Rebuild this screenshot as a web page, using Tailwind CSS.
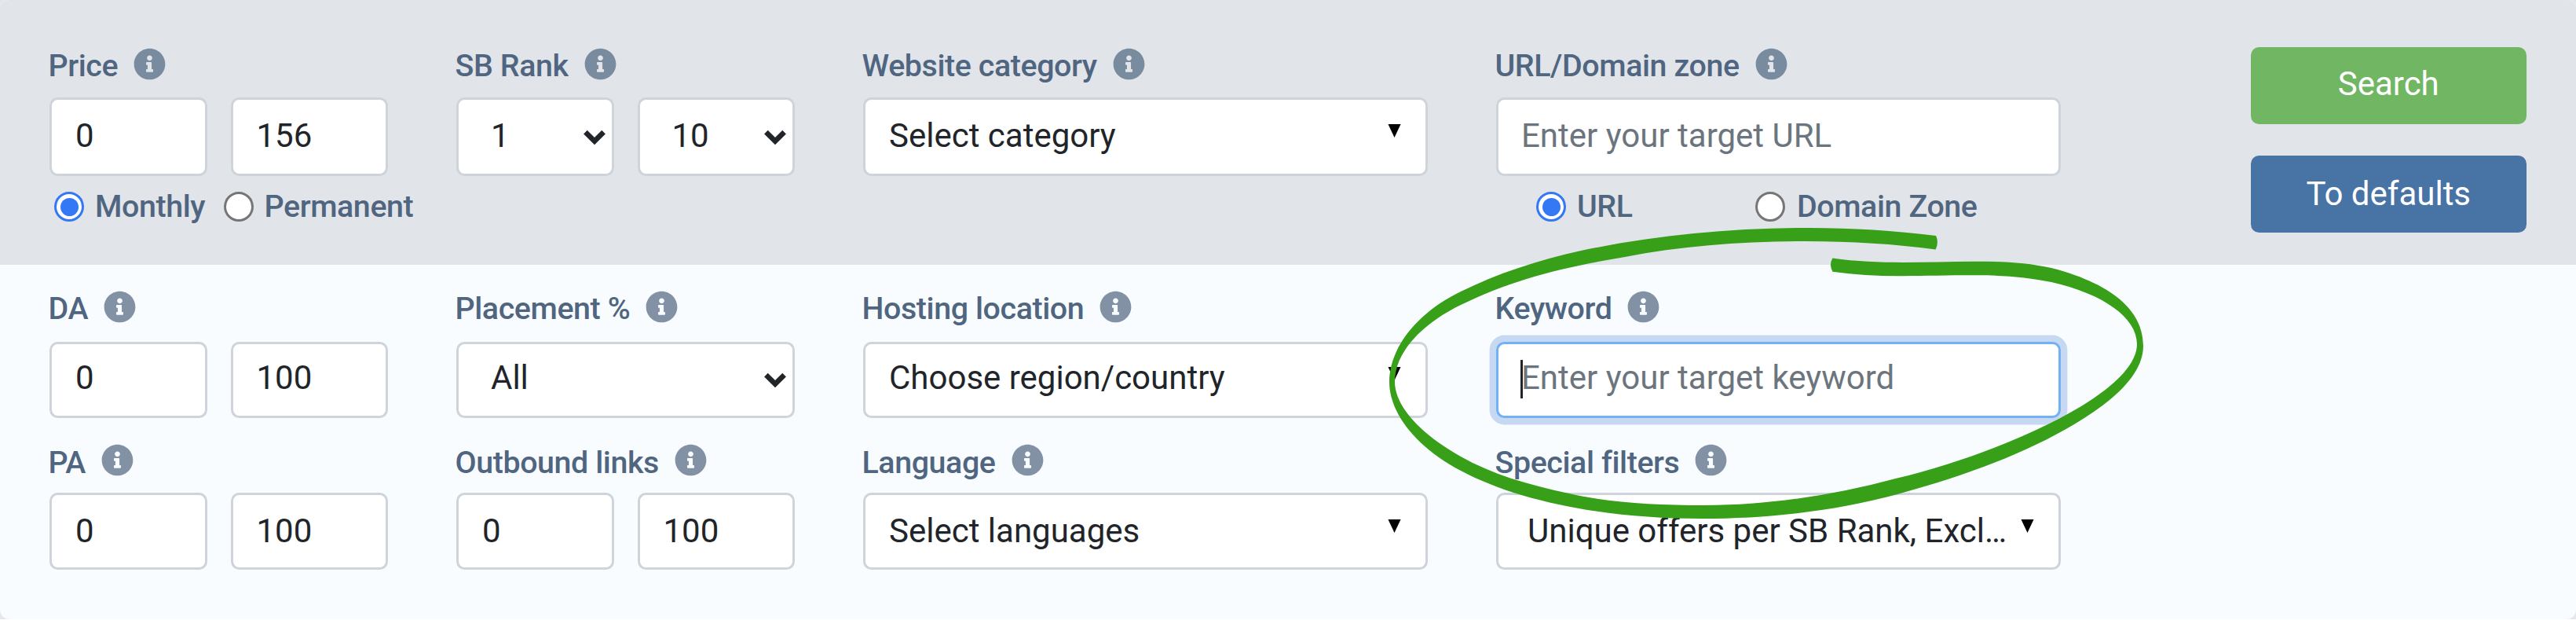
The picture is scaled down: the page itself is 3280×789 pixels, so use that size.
<!DOCTYPE html>
<html lang="en">
<head>
<meta charset="utf-8">
<title>Offer filters</title>
<script src="https://cdn.jsdelivr.net/npm/@tailwindcss/browser@4"></script>
</head>
<body class="bg-white font-['Roboto',sans-serif] text-[42px] leading-none text-[#212529]">
<svg class="hidden">
  <symbol id="info" viewBox="0 0 512 512"><path fill="currentColor" d="M256 8C119.043 8 8 119.083 8 256c0 136.997 111.043 248 248 248s248-111.003 248-248C504 119.083 392.957 8 256 8zm0 110c23.196 0 42 18.804 42 42s-18.804 42-42 42-42-18.804-42-42 18.804-42 42-42zm56 254c0 6.627-5.373 12-12 12h-88c-6.627 0-12-5.373-12-12v-24c0-6.627 5.373-12 12-12h12v-64h-12c-6.627 0-12-5.373-12-12v-24c0-6.627 5.373-12 12-12h64c6.627 0 12 5.373 12 12v100h12c6.627 0 12 5.373 12 12v24z"/></symbol>
  <symbol id="chevron" viewBox="0 0 28 20"><path fill="none" stroke="currentColor" stroke-width="6.6" d="M2.4 3.2 14 14.6 25.6 3.2"/></symbol>
  <symbol id="caret" viewBox="0 0 17 18"><path fill="#000" d="M0 0H17L8.5 18z"/></symbol>
</svg>
<main class="relative h-[789px] w-[3280px] overflow-hidden bg-white">
  <div class="h-[788px] overflow-hidden bg-[#e6e7ea]">
  <div class="h-[788px] overflow-hidden rounded-[12px] bg-[#f8fcff]">
    <section class="flex h-[336.7px] gap-[87px] bg-[#e1e4e9] pl-[63px] pt-[54px]">
      <div class="w-[431px]">
        <div class="-ml-[1.5px] flex h-[60px] items-center gap-[20px] text-[39.375px] font-medium tracking-[-0.4px] text-[#4f6580]">Price<svg class="mb-[5px] size-[41px] text-[#798b9e]"><use href="#info"/></svg></div>
        <div class="mt-[10px] flex gap-[30px]">
          <div class="flex h-[100px] w-[200.5px] items-center rounded-[10.5px] border-[3px] border-[#ced4da] bg-white pb-[2px] pl-[30px]">0</div>
          <div class="flex h-[100px] w-[200.5px] items-center rounded-[10.5px] border-[3px] border-[#ced4da] bg-white pb-[2px] pl-[30px]">156</div>
        </div>
        <div class="mt-[14px] flex h-[50px] items-center whitespace-nowrap pl-[6px] text-[39.375px] font-medium tracking-[-0.4px] text-[#4f6580]">
          <span class="flex size-[38px] shrink-0 items-center justify-center rounded-full border-[3px] border-[#3478f6] bg-white"><span class="size-[23px] rounded-full bg-[#3478f6]"></span></span>
          <span class="ml-[14px] w-[163.5px] shrink-0">Monthly</span>
          <span class="size-[38px] shrink-0 rounded-full border-[3px] border-[#767676] bg-white"></span>
          <span class="ml-[14px]">Permanent</span>
        </div>
      </div>
      <div class="w-[431px]">
        <div class="-ml-[1.5px] flex h-[60px] items-center gap-[20px] text-[39.375px] font-medium tracking-[-0.4px] text-[#4f6580]">SB Rank<svg class="mb-[5px] size-[41px] text-[#798b9e]"><use href="#info"/></svg></div>
        <div class="mt-[10px] flex gap-[30px]">
          <div class="flex h-[100px] w-[200.5px] items-center justify-between rounded-[10.5px] border-[3px] border-[#ced4da] bg-white pb-[2px] pl-[41px] pr-[8px]">1<svg class="mt-[3px] h-[20px] w-[28px]"><use href="#chevron"/></svg></div>
          <div class="flex h-[100px] w-[200.5px] items-center justify-between rounded-[10.5px] border-[3px] border-[#ced4da] bg-white pb-[2px] pl-[41px] pr-[8px]">10<svg class="mt-[3px] h-[20px] w-[28px]"><use href="#chevron"/></svg></div>
        </div>
      </div>
      <div class="w-[719px]">
        <div class="-ml-[1.5px] flex h-[60px] items-center gap-[20px] text-[39.375px] font-medium tracking-[-0.4px] text-[#4f6580]">Website category<svg class="mb-[5px] size-[41px] text-[#798b9e]"><use href="#info"/></svg></div>
        <div class="mt-[10px] flex h-[100px] items-center justify-between rounded-[10.5px] border-[3px] border-[#ced4da] bg-white pb-[2px] pl-[30px] pr-[31px]">Select category<svg class="mb-[13px] h-[17px] w-[17px]"><use href="#caret"/></svg></div>
      </div>
      <div class="w-[718.5px]">
        <div class="-ml-[1.5px] flex h-[60px] items-center gap-[20px] text-[39.375px] font-medium tracking-[-0.4px] text-[#4f6580]">URL/Domain zone<svg class="mb-[5px] size-[41px] text-[#798b9e]"><use href="#info"/></svg></div>
        <div class="mt-[10px] flex h-[100px] items-center rounded-[10.5px] border-[3px] border-[#ced4da] bg-white pb-[2px] pl-[29px] text-[#6c757d]">Enter your target URL</div>
        <div class="mt-[14px] flex h-[50px] items-center whitespace-nowrap pl-[51px] text-[39.375px] font-medium tracking-[-0.4px] text-[#4f6580]">
          <span class="flex size-[38px] shrink-0 items-center justify-center rounded-full border-[3px] border-[#3478f6] bg-white"><span class="size-[23px] rounded-full bg-[#3478f6]"></span></span>
          <span class="ml-[14px] w-[227px] shrink-0">URL</span>
          <span class="size-[38px] shrink-0 rounded-full border-[3px] border-[#767676] bg-white"></span>
          <span class="ml-[15px]">Domain Zone</span>
        </div>
      </div>
      <div class="ml-[155px] mt-[6px] flex w-[351.500px] flex-col gap-[40px] text-center text-white">
        <div class="flex h-[98px] items-center justify-center rounded-[10.5px] bg-[#71b663] pb-[5px]">Search</div>
        <div class="flex h-[98px] items-center justify-center rounded-[10.5px] bg-[#4873a5]">To defaults</div>
      </div>
    </section>
    <section class="flex gap-[87px] pl-[63px] pt-[26px]">
      <div class="w-[431px]">
        <div class="-ml-[1.5px] flex h-[60px] items-center gap-[20px] text-[39.375px] font-medium tracking-[-0.4px] text-[#4f6580]">DA<svg class="mb-[5px] size-[41px] text-[#8391a5]"><use href="#info"/></svg></div>
        <div class="mt-[12px] flex gap-[30px]">
          <div class="flex h-[97.5px] w-[200.5px] items-center rounded-[10.5px] border-[3px] border-[#ced4da] bg-white pb-[5px] pl-[30px]">0</div>
          <div class="flex h-[97.5px] w-[200.5px] items-center rounded-[10.5px] border-[3px] border-[#ced4da] bg-white pb-[5px] pl-[30px]">100</div>
        </div>
        <div class="-ml-[1.5px] mt-[26px] flex h-[60px] items-center gap-[20px] text-[39.375px] font-medium tracking-[-0.4px] text-[#4f6580]">PA<svg class="mb-[5px] size-[41px] text-[#8391a5]"><use href="#info"/></svg></div>
        <div class="mt-[9px] flex gap-[30px]">
          <div class="flex h-[97.5px] w-[200.5px] items-center rounded-[10.5px] border-[3px] border-[#ced4da] bg-white pl-[30px]">0</div>
          <div class="flex h-[97.5px] w-[200.5px] items-center rounded-[10.5px] border-[3px] border-[#ced4da] bg-white pl-[30px]">100</div>
        </div>
      </div>
      <div class="w-[431px]">
        <div class="-ml-[1.5px] flex h-[60px] items-center gap-[20px] text-[39.375px] font-medium tracking-[-0.4px] text-[#4f6580]">Placement %<svg class="mb-[5px] size-[41px] text-[#8391a5]"><use href="#info"/></svg></div>
        <div class="mt-[12px] flex h-[97.5px] items-center justify-between rounded-[10.5px] border-[3px] border-[#ced4da] bg-white pb-[5px] pl-[41px] pr-[8px]">All<svg class="mt-[6px] h-[20px] w-[28px]"><use href="#chevron"/></svg></div>
        <div class="-ml-[1.5px] mt-[26px] flex h-[60px] items-center gap-[20px] text-[39.375px] font-medium tracking-[-0.4px] text-[#4f6580]">Outbound links<svg class="mb-[5px] size-[41px] text-[#8391a5]"><use href="#info"/></svg></div>
        <div class="mt-[9px] flex gap-[30px]">
          <div class="flex h-[97.5px] w-[200.5px] items-center rounded-[10.5px] border-[3px] border-[#ced4da] bg-white pl-[30px]">0</div>
          <div class="flex h-[97.5px] w-[200.5px] items-center rounded-[10.5px] border-[3px] border-[#ced4da] bg-white pl-[30px]">100</div>
        </div>
      </div>
      <div class="w-[719px]">
        <div class="-ml-[1.5px] flex h-[60px] items-center gap-[20px] text-[39.375px] font-medium tracking-[-0.4px] text-[#4f6580]">Hosting location<svg class="mb-[5px] size-[41px] text-[#8391a5]"><use href="#info"/></svg></div>
        <div class="mt-[12px] flex h-[97.5px] items-center justify-between rounded-[10.5px] border-[3px] border-[#ced4da] bg-white pb-[5px] pl-[30px] pr-[31px]">Choose region/country<svg class="mb-[11px] h-[17px] w-[17px]"><use href="#caret"/></svg></div>
        <div class="-ml-[1.5px] mt-[26px] flex h-[60px] items-center gap-[20px] text-[39.375px] font-medium tracking-[-0.4px] text-[#4f6580]">Language<svg class="mb-[5px] size-[41px] text-[#8391a5]"><use href="#info"/></svg></div>
        <div class="mt-[9px] flex h-[97.5px] items-center justify-between rounded-[10.5px] border-[3px] border-[#ced4da] bg-white pl-[30px] pr-[31px]">Select languages<svg class="mb-[12px] h-[17px] w-[17px]"><use href="#caret"/></svg></div>
      </div>
      <div class="w-[718.5px]">
        <div class="-ml-[1.5px] flex h-[60px] items-center gap-[20px] text-[39.375px] font-medium tracking-[-0.4px] text-[#4f6580]">Keyword<svg class="mb-[5px] size-[41px] text-[#8391a5]"><use href="#info"/></svg></div>
        <div class="relative mt-[12px] flex h-[97.5px] items-center rounded-[10.5px] border-[3px] border-[#73b1f7] bg-white pb-[5px] pl-[29px] text-[#6c757d] shadow-[0_0_0_8.4px_#c7d9f2]">Enter your target keyword<span class="absolute left-[28px] top-[20px] h-[49px] w-[3px] bg-[#212529]"></span></div>
        <div class="-ml-[1.5px] mt-[26px] flex h-[60px] items-center gap-[20px] text-[39.375px] font-medium tracking-[-0.4px] text-[#4f6580]">Special filters<svg class="mb-[5px] size-[41px] text-[#8391a5]"><use href="#info"/></svg></div>
        <div class="mt-[9px] flex h-[97.5px] items-center justify-between rounded-[10.5px] border-[3px] border-[#ced4da] bg-white pl-[37px] pr-[31px]">Unique offers per SB Rank, Excl…<svg class="mb-[12px] h-[17px] w-[17px]"><use href="#caret"/></svg></div>
      </div>
    </section>
  </div>
  </div>
  <!-- hand-drawn ring around the keyword field -->
  <svg class="pointer-events-none absolute inset-0 h-[789px] w-[3280px]" viewBox="0 0 3280 789"><path fill="#389f18" d="M2465 300C2412 293.500 2358 290 2303 290C2203 290 2103 300 2013 319C1958 331 1907 348 1860 371C1808 396 1769 440 1769 486C1769 525 1802 568 1860 599C1935 639 2048 660 2166 660C2254 660 2338 650 2416 629C2500 606 2577 578 2641 540C2695 508 2729 475 2729 440C2729 400 2697 363 2612 341C2580 334 2548 332.700 2514 332.700C2450 333 2392 337 2333.400 328.500Q2328.500 337 2333.400 345.700C2363 350 2393 351.500 2423 351.300C2450 351 2480 350.300 2514 350.300C2550 350 2582 353 2612 359C2678 374 2721 404 2721 438C2721 473 2667 511 2607.500 540C2550 568 2484 592 2413.600 609C2335 630 2252 643 2171 643C2106 643 2050 640 1998 628C1945 617 1899 603 1860 581C1805 550 1776 515 1776 486C1776 449 1809 413 1860 388C1925 356 1990 340 2069 327C2140 313 2220 307 2299 307C2358 307 2412 310.500 2464.600 317.500Q2469 308 2465 300Z"/></svg>
</main>
</body>
</html>
